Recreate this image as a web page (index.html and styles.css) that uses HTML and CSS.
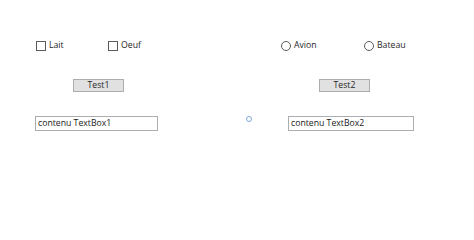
FILE: index.html
```html
<!DOCTYPE html>
<html lang="fr">
<head>
<meta charset="utf-8">
<title>Form</title>
<link rel="stylesheet" href="styles.css">
</head>
<body>
<div class="form">
  <div class="row row-options">
    <div class="left opts">
      <label class="opt opt-lait"><span class="check"></span>Lait</label>
      <label class="opt opt-oeuf"><span class="check"></span>Oeuf</label>
    </div>
    <div class="right opts">
      <label class="opt opt-avion"><span class="radio"></span>Avion</label>
      <label class="opt opt-bateau"><span class="radio"></span>Bateau</label>
    </div>
  </div>
  <div class="row row-buttons">
    <div class="left"><button class="btn btn1">Test1</button></div>
    <div class="right"><button class="btn btn2">Test2</button></div>
  </div>
  <div class="row row-text">
    <div class="left"><div class="textbox tb1">contenu TextBox1</div></div>
    <div class="mid"><span class="dot"></span></div>
    <div class="right2"><div class="textbox tb2">contenu TextBox2</div></div>
  </div>
</div>
</body>
</html>
```

FILE: styles.css
```css
html, body {
  margin: 0;
  padding: 0;
  background: #ffffff;
}
body {
  width: 474px;
  height: 210px;
  font-family: "Open Sans", "Noto Sans", sans-serif;
  font-size: 8.7px;
  color: #262626;
}
.form {
  padding-top: 40px;
}
.row {
  display: flex;
  align-items: flex-start;
}
.left {
  width: 246px;
  flex: none;
}
.right {
  flex: none;
}
.opts {
  display: flex;
  align-items: center;
  height: 11px;
}
.row-options .left {
  padding-left: 36px;
  box-sizing: border-box;
}
.row-options .right {
  padding-left: 35px;
}
.opt {
  display: flex;
  align-items: center;
  line-height: 11px;
}
.opt-lait { width: 72px; }
.opt-avion { width: 83px; }
.check {
  width: 10px;
  height: 10px;
  border: 1px solid #5a5a5a;
  box-sizing: border-box;
  margin-right: 3px;
  background: #fff;
}
.opt .check, .opt .radio { flex: none; }
.radio {
  width: 10px;
  height: 10px;
  border: 1px solid #5a5a5a;
  border-radius: 50%;
  box-sizing: border-box;
  margin-right: 3px;
  margin-top: 1px;
}
.row-buttons {
  margin-top: 28px;
}
.row-buttons .left {
  padding-left: 73px;
  box-sizing: border-box;
}
.row-buttons .right {
  padding-left: 73px;
}
.btn {
  display: block;
  width: 51px;
  height: 13px;
  padding: 0;
  margin: 0;
  border: 1px solid #adadad;
  background: #e1e1e1;
  font-family: inherit;
  font-size: 8.7px;
  line-height: 11px;
  color: #262626;
  text-align: center;
}
.row-text {
  margin-top: 24px;
}
.row-text .left {
  width: 246px;
  padding-left: 35px;
  box-sizing: border-box;
}
.textbox {
  height: 15px;
  border: 1px solid #abadb3;
  box-sizing: border-box;
  padding-left: 2px;
  line-height: 13px;
  white-space: nowrap;
  color: #1a1a1a;
}
.tb1 { width: 123px; }
.tb2 { width: 126px; }
.mid {
  width: 42px;
  flex: none;
}
.dot {
  display: block;
  width: 4px;
  height: 4px;
  border: 1px solid #7fa6d8;
  border-radius: 50%;
  margin-top: 0px;
}
.right2 { flex: none; }
```
